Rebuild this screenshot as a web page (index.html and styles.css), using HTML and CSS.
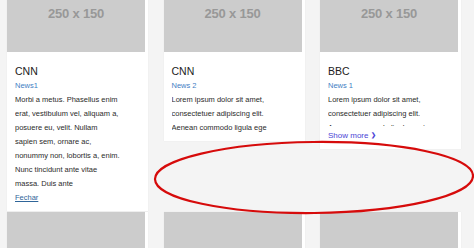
FILE: index.html
```html
<!DOCTYPE html>
<html>
<head>
<meta charset="utf-8">
<link rel="stylesheet" href="styles.css">
</head>
<body>
<div class="grid">
  <div class="card">
    <div class="thumb"><span>250 x 150</span></div>
    <div class="body">
      <div class="title">CNN</div>
      <a class="tag">News1</a>
      <div class="text">Morbi a metus. Phasellus enim<br>erat, vestibulum vel, aliquam a,<br>posuere eu, velit. Nullam<br>sapien sem, ornare ac,<br>nonummy non, lobortis a, enim.<br>Nunc tincidunt ante vitae<br>massa. Duis ante</div>
      <a class="close">Fechar</a>
    </div>
  </div>
  <div class="card">
    <div class="thumb"><span>250 x 150</span></div>
    <div class="body">
      <div class="title">CNN</div>
      <a class="tag">News 2</a>
      <div class="text clip">Lorem ipsum dolor sit amet,<br>consectetuer adipiscing elit.<br>Aenean commodo ligula ege</div>
    </div>
  </div>
  <div class="card">
    <div class="thumb"><span>250 x 150</span></div>
    <div class="body">
      <div class="title">BBC</div>
      <a class="tag">News 1</a>
      <div class="text clip">Lorem ipsum dolor sit amet,<br>consectetuer adipiscing elit.<br>Aenean commodo ligula eget</div>
      <a class="more">Show more <span class="chev">&#x276F;</span></a>
    </div>
  </div>
  <div class="card"><div class="thumb"></div></div>
  <div class="card"><div class="thumb"></div></div>
  <div class="card"><div class="thumb"></div></div>
</div>
<svg class="mark" width="474" height="248" viewBox="0 0 474 248">
  <ellipse cx="314" cy="177.5" rx="159" ry="35.5" transform="rotate(-0.6 314 177.5)" fill="none" stroke="#d60b0b" stroke-width="2.2"/>
</svg>
</body>
</html>
```
FILE: styles.css
```css
html, body {
  margin: 0;
  height: 248px;
  overflow: hidden;
}
body {
  background: #f4f4f4;
  font-family: "Liberation Sans", Arial, sans-serif;
  color: #333;
  position: relative;
}
.grid {
  display: grid;
  grid-template-columns: 141px 141px 141px;
  column-gap: 15.5px;
  row-gap: 1px;
  align-items: start;
  padding-left: 7px;
  margin-top: -32px;
}
.card {
  background: #fff;
  box-shadow: 0 0 1px rgba(0,0,0,0.08);
}
.thumb {
  height: 84px;
  width: calc(100% - 3px);
  background: #cccccc;
  display: flex;
  justify-content: center;
  padding-top: 39px;
  box-sizing: border-box;
  font-size: 13px;
  line-height: 13px;
  font-weight: bold;
  color: #989898;
  letter-spacing: -0.2px;
}
.body {
  padding: 13px 8px 6px;
}
.title {
  font-size: 10.5px;
  line-height: 12px;
  color: #222;
}
.tag {
  display: block;
  margin-top: 3px;
  font-size: 7.5px;
  line-height: 12px;
  color: #3f80c4;
}
.text {
  margin-top: 1px;
  font-size: 7.5px;
  line-height: 14px;
  white-space: nowrap;
  overflow: hidden;
  color: #2b2b2b;
}
.clip {
  height: 42px;
}
.close {
  display: block;
  font-size: 7.5px;
  line-height: 14px;
  color: #2f6599;
  text-decoration: underline;
}
.more {
  display: block;
  position: relative;
  margin-top: -9px;
  padding-top: 2px;
  background: #fff;
  font-size: 8px;
  line-height: 14px;
  color: #4c45d6;
}
.chev {
  font-size: 6px;
  font-weight: bold;
  vertical-align: 1px;
}
.mark {
  position: absolute;
  left: 0;
  top: 0;
  pointer-events: none;
}
```
